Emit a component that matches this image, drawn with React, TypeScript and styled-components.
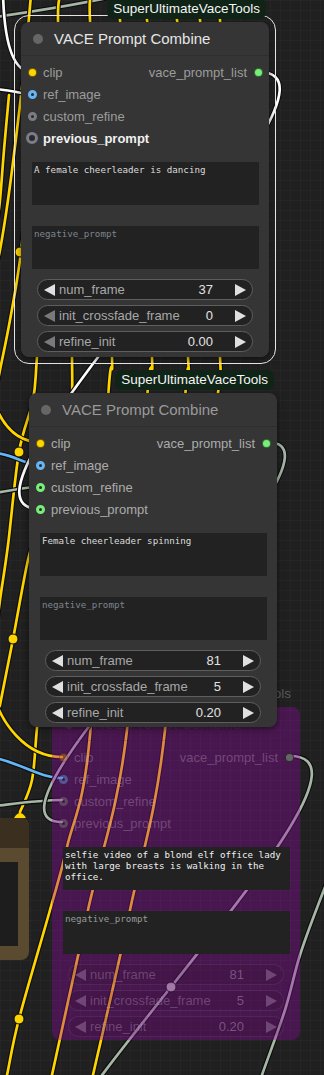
import React from 'react';
import styled, { createGlobalStyle } from 'styled-components';

type Pt = [number, number];

const GlobalStyle = createGlobalStyle`
  *, *::before, *::after { box-sizing: border-box; }
  html, body { margin: 0; padding: 0; background: #202020; }
  body { font-family: "Liberation Sans", Arial, sans-serif; }
`;

const YELLOW = '#ffd500';
const BLUE = '#64b5f6';
const SAGE = '#a6b6a6';
const GREEN = '#77ee77';

const St = {
  Canvas: styled.div`
    position: relative;
    width: 324px;
    height: 1075px;
    overflow: hidden;
    background-color: #202020;
    background-image: linear-gradient(rgba(255, 255, 255, 0.022) 1px, transparent 1px),
      linear-gradient(90deg, rgba(255, 255, 255, 0.022) 1px, transparent 1px);
    background-size: 10px 10px;
  `,
  Wires: styled.svg`
    position: absolute;
    left: 0;
    top: 0;
  `,
  NodeFrame: styled.div<{ $x: number; $y: number; $z: number }>`
    position: absolute;
    z-index: ${(p) => p.$z};
    left: ${(p) => p.$x}px;
    top: ${(p) => p.$y - 23}px;
    width: 248px;
    display: flex;
    flex-direction: column;
  `,
  Badge: styled.div<{ $dim?: boolean }>`
    position: relative;
    z-index: 2;
    align-self: flex-end;
    margin: 0 3px 3px 0;
    height: 20px;
    padding: 0 6px;
    border-radius: 6px;
    background: ${(p) => (p.$dim ? 'transparent' : '#0f2417')};
    color: ${(p) => (p.$dim ? '#5a5a5a' : '#f4f4f4')};
    font-size: 13.5px;
    line-height: 20px;
  `,
  NodeBody: styled.div<{ $h: number; $selected?: boolean; $bypass?: boolean }>`
    height: ${(p) => p.$h}px;
    border-radius: 8px;
    background: ${(p) => (p.$bypass ? 'rgba(152, 9, 169, 0.35)' : '#353535')};
    box-shadow: ${(p) => (p.$bypass ? 'none' : '0 2px 7px rgba(0, 0, 0, 0.5)')};
    outline: ${(p) => (p.$selected ? '1px solid #e4e4e4' : 'none')};
    outline-offset: 6px;
    display: flex;
    flex-direction: column;
  `,
  TitleBar: styled.div<{ $color: string }>`
    height: 34px;
    display: flex;
    align-items: center;
    gap: 11px;
    padding-left: 12px;
    border-bottom: 1px solid rgba(0, 0, 0, 0.12);
    font-size: 15px;
    color: ${(p) => p.$color};
  `,
  TitleDot: styled.span<{ $dim?: boolean }>`
    width: 10px;
    height: 10px;
    border-radius: 50%;
    background: ${(p) => (p.$dim ? 'rgba(255,255,255,0.1)' : '#666')};
  `,
  Slots: styled.div`
    padding-top: 5px;
    display: flex;
    flex-direction: column;
  `,
  SlotRow: styled.div`
    height: 22px;
    display: flex;
    align-items: center;
    justify-content: space-between;
  `,
  SlotSide: styled.div`
    display: flex;
    align-items: center;
  `,
  DotCell: styled.span<{ $w: number; $dim?: boolean }>`
    width: ${(p) => p.$w}px;
    display: flex;
    justify-content: center;
    align-items: center;
    opacity: ${(p) => (p.$dim ? 0.4 : 1)};
  `,
  SlotDot: styled.span<{ $c: string; $ring?: boolean; $size?: number }>`
    width: ${(p) => p.$size ?? 9}px;
    height: ${(p) => p.$size ?? 9}px;
    border-radius: 50%;
    background: ${(p) => (p.$ring ? '#2a2a2a' : p.$c)};
    border: ${(p) => (p.$ring ? `3px solid ${p.$c}` : '1px solid rgba(0, 0, 0, 0.55)')};
  `,
  SlotLabel: styled.span<{ $color: string; $bold?: boolean }>`
    font-size: 13px;
    color: ${(p) => p.$color};
    font-weight: ${(p) => (p.$bold ? 700 : 400)};
  `,
  PromptBox: styled.div<{ $gap: number; $muted?: boolean; $bright?: boolean }>`
    margin: ${(p) => p.$gap}px 10px 0 11px;
    height: 43px;
    padding: 2px 2px;
    background: #222;
    font-family: "DejaVu Sans Mono", "Liberation Mono", monospace;
    font-size: 9.2px;
    line-height: 11px;
    white-space: pre-wrap;
    color: ${(p) => (p.$muted ? (p.$bright ? '#9a9a9a' : '#7d8590') : p.$bright ? '#f0f0f0' : '#dcdcdc')};
  `,
  Widgets: styled.div`
    margin: 10px 16px 0;
    display: flex;
    flex-direction: column;
    gap: 5px;
  `,
  Pill: styled.div<{ $dim?: boolean }>`
    height: 21px;
    border-radius: 11px;
    border: 1px solid ${(p) => (p.$dim ? 'rgba(255,255,255,0.07)' : '#5e5e5e')};
    background: ${(p) => (p.$dim ? 'rgba(0,0,0,0.08)' : '#222')};
    display: flex;
    align-items: center;
    padding: 0 6px;
    font-size: 13px;
  `,
  PillLabel: styled.span<{ $color: string }>`
    flex: 1;
    margin-left: 4px;
    color: ${(p) => p.$color};
  `,
  PillValue: styled.span<{ $color: string }>`
    margin-right: 22px;
    color: ${(p) => p.$color};
  `,
  SideNode: styled.div`
    position: absolute;
    z-index: 1;
    left: -100px;
    top: 818px;
    width: 129px;
    height: 142px;
    border-radius: 8px;
    overflow: hidden;
    background: #5a4a30;
    display: flex;
    flex-direction: column;
  `,
  SideTitle: styled.div`
    height: 30px;
    background: #3b2f20;
  `,
  SidePreview: styled.div`
    margin: 14px 11px 0 10px;
    height: 84px;
    background: #1d1d1d;
  `,
};

const smooth = (pts: Pt[]) => {
  let d = `M ${pts[0][0]} ${pts[0][1]}`;
  for (let i = 0; i < pts.length - 1; i++) {
    const p0 = pts[i - 1] || pts[i];
    const p1 = pts[i];
    const p2 = pts[i + 1];
    const p3 = pts[i + 2] || p2;
    const c1 = [p1[0] + (p2[0] - p0[0]) / 6, p1[1] + (p2[1] - p0[1]) / 6];
    const c2 = [p2[0] - (p3[0] - p1[0]) / 6, p2[1] - (p3[1] - p1[1]) / 6];
    d += ` C ${c1[0]} ${c1[1]}, ${c2[0]} ${c2[1]}, ${p2[0]} ${p2[1]}`;
  }
  return d;
};

// litegraph style spline between an output and an input
const link = (a: Pt, b: Pt) => {
  const d = Math.hypot(b[0] - a[0], b[1] - a[1]) * 0.25;
  return `M ${a[0]} ${a[1]} C ${a[0] + d} ${a[1]}, ${b[0] - d} ${b[1]}, ${b[0]} ${b[1]}`;
};

const Wire: React.FC<{ d: string; color: string }> = ({ d, color }) => (
  <g fill="none" strokeLinecap="round">
    <path d={d} stroke="#0c0c0c" strokeWidth={4.8} />
    <path d={d} stroke={color} strokeWidth={2.7} />
  </g>
);

const clipLines: Pt[][] = [
  [[31, -5], [25, 60], [17, 130], [8, 200], [0, 250], [-5, 270]],
  [[9, 95], [4, 150], [0, 200], [-4, 230]],
  [[30, 150], [21, 252], [10, 320], [0, 370], [-5, 395]],
  [[45, 250], [37, 357], [33, 400], [19, 452], [8, 545], [0, 600], [-5, 640]],
  [[64, -5], [58, 20], [66, 200], [72, 357], [68, 420], [40, 520], [28, 560], [13, 639], [0, 705], [-8, 740]],
  [[94, -5], [90, 20], [104, 200], [112, 357], [108, 400], [90, 735], [67, 847], [50, 910], [19, 1019], [7, 1075], [3, 1090]],
  [[122, -5], [120, 20], [140, 200], [152, 357], [147, 400], [127, 730], [88, 910], [52, 1075], [48, 1090]],
  [[149, -5], [147, 20], [175, 200], [188, 357], [185, 400], [165, 730], [130, 910], [93, 1075], [89, 1090]],
  [[179, -5], [177, 20], [208, 200], [220, 357], [217, 400], [195, 560], [180, 680]],
  [[202, -5], [200, 20], [215, 120]],
  [[222, -5], [220, 20], [230, 120]],
  [[45, 650], [37, 728], [32, 780], [20, 812]],
];

const WireLayer: React.FC = () => (
  <St.Wires width={324} height={1075} viewBox="0 0 324 1075">
    <Wire d="M -5 17 C 30 12, 70 6, 112 -3" color={SAGE} />
    {clipLines.map((pts, i) => (
      <Wire key={i} d={smooth(pts)} color={YELLOW} />
    ))}
    <Wire d="M -5 405 C 5 430, 20 442, 40 442" color={YELLOW} />
    <Wire d="M -8 690 C 0 722, 25 757, 62 757" color={YELLOW} />
    <Wire d="M -5 453 C 15 455, 25 465, 40 465" color={BLUE} />
    <Wire d="M -5 758 C 20 763, 40 778, 62 778" color={BLUE} />
    <Wire d="M -5 493 C 15 490, 25 487, 40 487" color={SAGE} />
    <Wire d="M -5 806 C 20 803, 40 800, 62 800" color={SAGE} />
    <Wire d={smooth([[340, 850], [320, 900], [300, 955], [285, 1010], [262, 1075], [258, 1090]])} color={SAGE} />
    <Wire d={link([267, 442], [62, 822])} color={SAGE} />
    <Wire d={link([290, 756], [52, 1218])} color={SAGE} />
    <Wire d="M 3 -8 C 4 40, 12 72, 32 72" color="#ffffff" />
    <Wire d="M -10 89 C 10 89, 20 94, 32 94" color="#ffffff" />
    <Wire d={link([259, 72], [40, 509])} color="#ffffff" />
    {([[20, 252], [19, 452], [13, 639], [19, 1019]] as Pt[]).map(([x, y]) => (
      <circle key={y} cx={x} cy={y} r={5} fill={YELLOW} stroke="#0c0c0c" strokeWidth={1} />
    ))}
    <circle cx={171} cy={987} r={5} fill={SAGE} stroke="#0c0c0c" strokeWidth={1} />
    <path d="M 14 818 Q 20 808 26 818 Z" fill={YELLOW} />
  </St.Wires>
);

const Arrow: React.FC<{ dir: 'l' | 'r'; color: string }> = ({ dir, color }) => (
  <svg width={11} height={12} viewBox="0 0 11 12">
    <polygon points={dir === 'l' ? '11,0 11,12 0,6' : '0,0 11,6 0,12'} fill={color} />
  </svg>
);

interface SlotDef {
  name: string;
  color: string;
  ring?: boolean;
  size?: number;
  bold?: boolean;
}

interface WidgetDef {
  name: string;
  value: string;
  canDecrease: boolean;
}

interface NodeProps {
  x: number;
  y: number;
  h: number;
  z: number;
  selected?: boolean;
  bypass?: boolean;
  titleColor: string;
  labelColor: string;
  prompt: string;
  inputs: SlotDef[];
  outputColor: string;
  widgets: WidgetDef[];
}

const PromptNode: React.FC<NodeProps> = ({
  x,
  y,
  h,
  z,
  selected,
  bypass,
  titleColor,
  labelColor,
  prompt,
  inputs,
  outputColor,
  widgets,
}) => {
  const fadedText = 'rgba(205, 175, 215, 0.32)';
  const valueColor = bypass ? 'rgba(215, 185, 225, 0.38)' : '#e2e2e2';
  const widgetLabel = bypass ? fadedText : '#a8a8a8';
  return (
    <St.NodeFrame $x={x} $y={y} $z={z}>
      <St.Badge $dim={bypass}>SuperUltimateVaceTools</St.Badge>
      <St.NodeBody $h={h} $selected={selected} $bypass={bypass}>
        <St.TitleBar $color={titleColor}>
          <St.TitleDot $dim={bypass} />
          VACE Prompt Combine
        </St.TitleBar>
        <St.Slots>
          {inputs.map((s, i) => (
            <St.SlotRow key={s.name}>
              <St.SlotSide>
                <St.DotCell $w={22} $dim={bypass}>
                  <St.SlotDot $c={s.color} $ring={s.ring} $size={s.size} />
                </St.DotCell>
                <St.SlotLabel $color={s.bold ? '#f0f0f0' : labelColor} $bold={s.bold}>
                  {s.name}
                </St.SlotLabel>
              </St.SlotSide>
              {i === 0 && (
                <St.SlotSide>
                  <St.SlotLabel $color={labelColor}>vace_prompt_list</St.SlotLabel>
                  <St.DotCell $w={22}>
                    <St.SlotDot $c={outputColor} />
                  </St.DotCell>
                </St.SlotSide>
              )}
            </St.SlotRow>
          ))}
        </St.Slots>
        <St.PromptBox $gap={13} $bright={bypass}>
          {prompt}
        </St.PromptBox>
        <St.PromptBox $gap={21} $muted $bright={bypass}>
          negative_prompt
        </St.PromptBox>
        <St.Widgets>
          {widgets.map((w) => (
            <St.Pill key={w.name} $dim={bypass}>
              <Arrow
                dir="l"
                color={bypass ? fadedText : w.canDecrease ? '#e0e0e0' : '#7a7a7a'}
              />
              <St.PillLabel $color={widgetLabel}>{w.name}</St.PillLabel>
              <St.PillValue $color={valueColor}>{w.value}</St.PillValue>
              <Arrow dir="r" color={bypass ? fadedText : '#e0e0e0'} />
            </St.Pill>
          ))}
        </St.Widgets>
      </St.NodeBody>
    </St.NodeFrame>
  );
};

const App: React.FC = () => {
  return (
    <>
      <GlobalStyle />
      <St.Canvas>
        <WireLayer />
        <St.SideNode>
          <St.SideTitle />
          <St.SidePreview />
        </St.SideNode>
        <PromptNode
          x={52}
          y={707}
          h={333}
          z={2}
          bypass
          titleColor="rgba(205, 175, 215, 0.1)"
          labelColor="rgba(205, 175, 215, 0.32)"
          prompt={'selfie video of a blond elf office lady\nwith large breasts is walking in the\noffice.'}
          inputs={[
            { name: 'clip', color: '#e08a20' },
            { name: 'ref_image', color: BLUE, ring: true },
            { name: 'custom_refine', color: '#888', ring: true },
            { name: 'previous_prompt', color: '#888', ring: true },
          ]}
          outputColor="#666"
          widgets={[
            { name: 'num_frame', value: '81', canDecrease: true },
            { name: 'init_crossfade_frame', value: '5', canDecrease: true },
            { name: 'refine_init', value: '0.20', canDecrease: true },
          ]}
        />
        <PromptNode
          x={21}
          y={22}
          h={335}
          z={3}
          selected
          titleColor="#e6e6e6"
          labelColor="#9c9c9c"
          prompt="A female cheerleader is dancing"
          inputs={[
            { name: 'clip', color: YELLOW },
            { name: 'ref_image', color: BLUE, ring: true },
            { name: 'custom_refine', color: '#7c7c84', ring: true },
            { name: 'previous_prompt', color: '#7c7c8a', ring: true, size: 12, bold: true },
          ]}
          outputColor={GREEN}
          widgets={[
            { name: 'num_frame', value: '37', canDecrease: true },
            { name: 'init_crossfade_frame', value: '0', canDecrease: false },
            { name: 'refine_init', value: '0.00', canDecrease: false },
          ]}
        />
        <PromptNode
          x={29}
          y={393}
          h={334}
          z={4}
          titleColor="#9a9a9a"
          labelColor="#ababab"
          prompt="Female cheerleader spinning"
          inputs={[
            { name: 'clip', color: YELLOW },
            { name: 'ref_image', color: BLUE, ring: true },
            { name: 'custom_refine', color: GREEN, ring: true },
            { name: 'previous_prompt', color: GREEN, ring: true },
          ]}
          outputColor={GREEN}
          widgets={[
            { name: 'num_frame', value: '81', canDecrease: true },
            { name: 'init_crossfade_frame', value: '5', canDecrease: true },
            { name: 'refine_init', value: '0.20', canDecrease: true },
          ]}
        />
      </St.Canvas>
    </>
  );
};

export default App;
